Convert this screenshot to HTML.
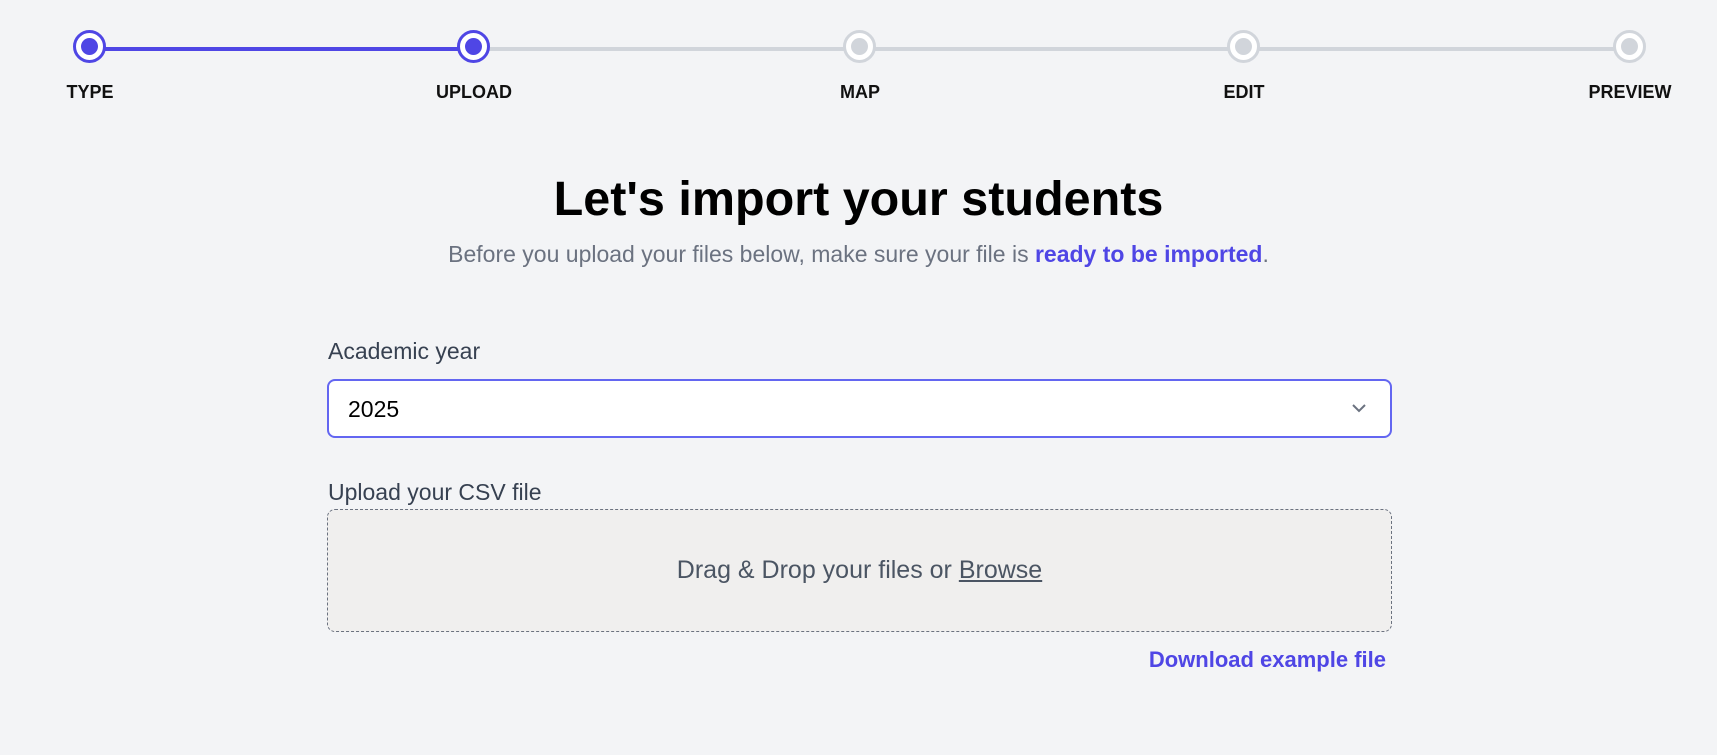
<!DOCTYPE html>
<html><head><style>
body{margin:0;width:1717px;height:755px;background:#f3f4f6;font-family:"Liberation Sans",sans-serif;position:relative;overflow:hidden}
.line{position:absolute;top:47px;height:4px}
.c{position:absolute;top:30px;width:33px;height:33px;border-radius:50%;background:#fff;box-sizing:border-box;border:3px solid #d1d5db}
.c::after{content:"";position:absolute;left:50%;top:50%;width:17px;height:17px;margin:-8.5px;border-radius:50%;background:#d1d5db}
.c.a{border-color:#4f46e5}.c.a::after{background:#4f46e5}
.l{position:absolute;top:82px;font-size:18px;font-weight:bold;color:#111;transform:translateX(-50%)}
.abs{position:absolute}
</style></head><body>
<div class="line" style="left:90px;width:384px;background:#4f46e5"></div>
<div class="line" style="left:474px;width:1156px;background:#d1d5db"></div>
<div class="c a" style="left:73px"></div>
<div class="c a" style="left:457px"></div>
<div class="c" style="left:843px"></div>
<div class="c" style="left:1227px"></div>
<div class="c" style="left:1613px"></div>
<div class="l" style="left:90px">TYPE</div>
<div class="l" style="left:474px">UPLOAD</div>
<div class="l" style="left:860px">MAP</div>
<div class="l" style="left:1244px">EDIT</div>
<div class="l" style="left:1630px">PREVIEW</div>
<div class="abs" style="left:0;width:1717px;top:171px;text-align:center;font-size:48.5px;font-weight:bold;color:#000">Let's import your students</div>
<div class="abs" style="left:0;width:1717px;top:241px;text-align:center;font-size:23px;color:#6b7280">Before you upload your files below, make sure your file is <span style="color:#4f46e5;font-weight:bold">ready to be imported</span>.</div>
<div class="abs" style="left:328px;top:338px;font-size:23px;color:#374151">Academic year</div>
<div class="abs" style="left:327px;top:379px;width:1065px;height:59px;box-sizing:border-box;border:2.5px solid #6366f1;border-radius:8px;background:#fff">
<span style="position:absolute;left:19px;top:15px;font-size:23px;color:#000">2025</span>
<svg style="position:absolute;right:22px;top:20px" width="18" height="14" viewBox="0 0 18 14"><path d="M3 4l6 6 6-6" fill="none" stroke="#6b7280" stroke-width="2"/></svg>
</div>
<div class="abs" style="left:328px;top:479px;font-size:23px;color:#374151">Upload your CSV file</div>
<div class="abs" style="left:327px;top:509px;width:1065px;height:123px;box-sizing:border-box;border:1px dashed #6b7280;border-radius:8px;background:#f0efee;text-align:center;line-height:121px;font-size:25px;color:#4b5563">Drag &amp; Drop your files or <span style="text-decoration:underline">Browse</span></div>
<div class="abs" style="right:331px;top:647px;font-size:22px;font-weight:bold;color:#4f46e5">Download example file</div>
</body></html>
